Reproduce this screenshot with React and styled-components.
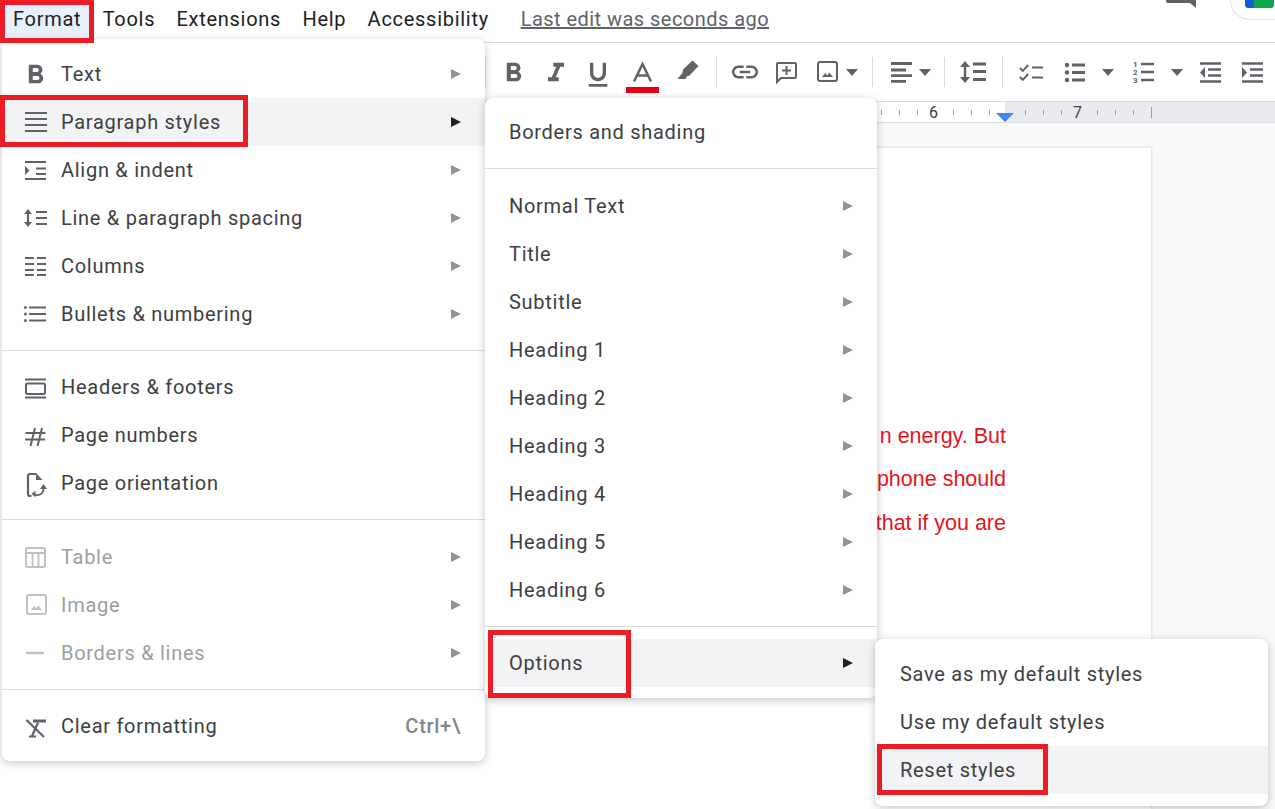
import React from "react";
import styled, { createGlobalStyle } from "styled-components";

const GRAY = "#5f6368";
const LIGHT = "#bdc1c6";

const GlobalStyle = createGlobalStyle`
	html, body {
		margin: 0;
		padding: 0;
		background: #fff;
		font-family: Roboto, "Liberation Sans", sans-serif;
	}
	* {
		box-sizing: border-box;
	}
`;

const Svg = ({ w = 24, h = 24, box, children, color = GRAY }) => (
	<IconSvg
		width={w}
		height={h}
		viewBox={box || `0 0 ${w} ${h}`}
		fill="none"
		stroke={color}
		strokeWidth="2.4"
		$color={color}
	>
		{children}
	</IconSvg>
);

const Bold = ({ color }) => (
	<Svg box="3.4 2 18 18" color={color}>
		<path
			stroke="none"
			fill={color || GRAY}
			d="M15.6 10.79c.97-.67 1.65-1.77 1.65-2.79 0-2.26-1.75-4-4-4H7v14h7.04c2.09 0 3.71-1.7 3.71-3.79 0-1.52-.86-2.82-2.15-3.42zM10 6.5h3c.83 0 1.5.67 1.5 1.5s-.67 1.5-1.5 1.5h-3v-3zm3.5 9H10v-3h3.5c.83 0 1.5.67 1.5 1.5s-.67 1.5-1.5 1.5z"
		/>
	</Svg>
);
const Italic = () => (
	<Svg box="3 2 18 18">
		<path stroke="none" fill={GRAY} d="M10 4v3h2.21l-3.42 8H6v3h8v-3h-2.21l3.42-8H18V4z" />
	</Svg>
);
const Underline = () => (
	<Svg box="3 1 18 18">
		<path
			stroke="none"
			fill={GRAY}
			d="M12 17c3.31 0 6-2.69 6-6V3h-2.5v8c0 1.93-1.57 3.5-3.5 3.5S8.5 12.93 8.5 11V3H6v8c0 3.31 2.69 6 6 6zm-7 2v2h14v-2H5z"
		/>
	</Svg>
);
const TextColor = () => (
	<Svg w={33} h={36}>
		<path d="M8 24.5 16.5 7 25 24.5M11 18.5h11" strokeWidth="2.5" />
		<rect x="0" y="30" width="33" height="6" fill="#e60012" stroke="none" />
	</Svg>
);
const Marker = () => (
	<Svg>
		<path
			stroke="none"
			fill={GRAY}
			d="M16.5.5l6 5.5-9.5 10h-2L9.5 19h-8L6 13.5 7 11V9.5z"
		/>
	</Svg>
);
const LinkIcon = () => (
	<Svg w={26} h={26} box="2 2 20 20">
		<path
			stroke="none"
			fill={GRAY}
			d="M3.9 12c0-1.71 1.39-3.1 3.1-3.1h4V7H7c-2.76 0-5 2.24-5 5s2.24 5 5 5h4v-1.9H7c-1.71 0-3.1-1.39-3.1-3.1zM8 13h8v-2H8v2zm9-6h-4v1.9h4c1.71 0 3.1 1.39 3.1 3.1s-1.39 3.1-3.1 3.1h-4V17h4c2.76 0 5-2.24 5-5s-2.24-5-5-5z"
		/>
	</Svg>
);
const CommentAdd = () => (
	<Svg>
		<path d="M4 3h17a1 1 0 0 1 1 1v13a1 1 0 0 1-1 1H7l-4 4V4a1 1 0 0 1 1-1z" strokeWidth="2" />
		<path d="M12.5 6v9M8 10.5h9" strokeWidth="2" />
	</Svg>
);
const ImageIcon = ({ color = GRAY }) => (
	<Svg color={color}>
		<rect x="3" y="2" width="19" height="19" rx="2" strokeWidth="2" />
		<path stroke="none" fill={color} d="M7 17l3.2-4 2 2.4 2-2.9L18 17z" />
	</Svg>
);
const Caret = () => (
	<Svg w={12} h={7}>
		<path stroke="none" fill={GRAY} d="M0 0h12L6 7z" />
	</Svg>
);
const AlignLeft = () => (
	<Svg>
		<path d="M2 3.5h21M2 10h15M2 15.7h21M2 21.4h15" strokeWidth="2.8" />
	</Svg>
);
const LineSpacing = () => (
	<Svg w={26} h={24}>
		<path d="M5 4v16" strokeWidth="2.4" />
		<path stroke="none" fill={GRAY} d="M5 1l5 6H0zM5 23l5-6H0z" />
		<path d="M13 4h13M13 11.5h13M13 19.5h13" strokeWidth="2.8" />
	</Svg>
);
const Checklist = () => (
	<Svg>
		<path d="M.8 8l3 2.8L9.2 5M.8 17l3 2.8 5.4-5.8" strokeWidth="1.9" />
		<path d="M13 7.5h11M13 17.5h11" strokeWidth="2" />
	</Svg>
);
const BulletList = () => (
	<Svg>
		<circle cx="4" cy="5" r="2.2" stroke="none" fill={GRAY} />
		<circle cx="4" cy="12.5" r="2.2" stroke="none" fill={GRAY} />
		<circle cx="4" cy="20" r="2.2" stroke="none" fill={GRAY} />
		<path d="M9 5h13M9 12.5h13M9 20h13" strokeWidth="2.8" />
	</Svg>
);
const NumberedList = () => (
	<Svg>
		<TinyNumber x="2" y="6.5">1</TinyNumber>
		<TinyNumber x="2" y="14.5">2</TinyNumber>
		<TinyNumber x="2" y="23">3</TinyNumber>
		<path d="M10 4h13M10 12h13M10 20h13" strokeWidth="2.6" />
	</Svg>
);
const Outdent = () => (
	<Svg>
		<path d="M1 3.5h21M9 9.5h13M9 15.5h13M1 21.5h21" strokeWidth="2.6" />
		<path stroke="none" fill={GRAY} d="M6 7v11l-5-5.5z" />
	</Svg>
);
const Indent = () => (
	<Svg>
		<path d="M1 3.5h21M9 9.5h13M9 15.5h13M1 21.5h21" strokeWidth="2.6" />
		<path stroke="none" fill={GRAY} d="M1 7v11l5-5.5z" />
	</Svg>
);

const ParagraphIcon = () => (
	<Svg>
		<path d="M1 3h22M1 9h22M1 15h22M1 21h22" strokeWidth="2.2" />
	</Svg>
);
const AlignIndent = () => (
	<Svg>
		<path d="M1 4h21M12 10.5h10M12 16h10M1 21h21" strokeWidth="2.2" />
		<path stroke="none" fill={GRAY} d="M1 8v9l4.5-4.5z" />
	</Svg>
);
const LineSpacingSmall = () => (
	<Svg>
		<path d="M4 6v12" strokeWidth="2.2" />
		<path stroke="none" fill={GRAY} d="M4 3l4 5H0zM4 21l4-5H0z" />
		<path d="M12 6h11M12 12h11M12 18h11" strokeWidth="2.2" />
	</Svg>
);
const ColumnsIcon = () => (
	<Svg>
		<path d="M1 4h9M1 10h9M1 16h9M1 21h9M13 4h9M13 10h9M13 16h9M13 21h9" strokeWidth="2.2" />
	</Svg>
);
const BulletsSmall = () => (
	<Svg>
		<circle cx="1.4" cy="5.5" r="1.5" stroke="none" fill={GRAY} />
		<circle cx="1.4" cy="12" r="1.5" stroke="none" fill={GRAY} />
		<circle cx="1.4" cy="18.5" r="1.5" stroke="none" fill={GRAY} />
		<path d="M5 5.5h17M5 12h17M5 18.5h17" strokeWidth="2" />
	</Svg>
);
const HeadersIcon = () => (
	<Svg>
		<path d="M1 4.5h21M1 22.5h21" strokeWidth="2.2" />
		<rect x="2" y="8.5" width="19" height="10.5" rx="1.5" strokeWidth="2" />
	</Svg>
);
const HashIcon = () => (
	<Svg>
		<path d="M1.5 10h20M1 16.5h20M11 5l-4.5 18M18 5l-4.5 18" strokeWidth="2" />
	</Svg>
);
const PageOrient = () => (
	<Svg>
		<path d="M12 3H6a2 2 0 0 0-2 2v18a2 2 0 0 0 2 2h1.5" strokeWidth="2.2" />
		<path stroke="none" fill={GRAY} d="M12 2l6.5 7H12z" />
		<path d="M10 23c3 2 7 1 8.5-1.5 1-1.5 1-2.5 1-4.5" strokeWidth="1.8" />
		<path stroke="none" fill={GRAY} d="M19.5 13l3.5 5h-7zM7.5 23l4-3.2v6.4z" />
	</Svg>
);
const TableIcon = () => (
	<Svg color={LIGHT}>
		<rect x="2" y="3" width="19" height="19" rx="2" strokeWidth="2" />
		<path d="M2 8h19M8.5 8v14M14.5 8v14" strokeWidth="1.8" />
	</Svg>
);
const DashIcon = () => (
	<Svg color={LIGHT}>
		<path d="M2 12h18" strokeWidth="2.4" />
	</Svg>
);
const ClearIcon = () => (
	<Svg>
		<path d="M2.5 6 20 23M14 8.5 8 22M5 22.5h7" strokeWidth="2.2" />
		<path d="M9 7h13" strokeWidth="3" />
	</Svg>
);

const Item = ({ icon, label, arrow = true, active, disabled, shortcut, inset = 22 }) => (
	<Row $active={active} $disabled={disabled} $inset={inset}>
		{icon && <IconSlot>{icon}</IconSlot>}
		<Label>{label}</Label>
		{shortcut && <Shortcut>{shortcut}</Shortcut>}
		{arrow && <Arrow $active={active} />}
	</Row>
);

const tickSlots = [0, 1, 2, "6", 4, 5, 6, "m", 8, 9, 10, "7", 12, 13, 14, "e"];

export default function App() {
	return (
		<Screen>
			<GlobalStyle />
			<MenuBar>
				<MenuButton $open>Format</MenuButton>
				<MenuButton>Tools</MenuButton>
				<MenuButton>Extensions</MenuButton>
				<MenuButton>Help</MenuButton>
				<MenuButton>Accessibility</MenuButton>
				<LastEdit>Last edit was seconds ago</LastEdit>
				<Corner>
					<svg width="30" height="8" viewBox="0 0 30 8">
						<path d="M0 0h30v8l-6-5H2a2 2 0 0 1-2-2z" fill={GRAY} />
					</svg>
					<MeetPill>
						<MeetBlue />
						<MeetGreen />
					</MeetPill>
				</Corner>
			</MenuBar>

			<Toolbar>
				<ToolDivider $gap={0} />
				<Tool $gap={16}><Bold /></Tool>
				<Tool $gap={18}><Italic /></Tool>
				<Tool $gap={18}><Underline /></Tool>
				<Tool $gap={16} $raise={6}><TextColor /></Tool>
				<Tool $gap={17}><Marker /></Tool>
				<ToolDivider $gap={16} />
				<Tool $gap={15}><LinkIcon /></Tool>
				<Tool $gap={16}><CommentAdd /></Tool>
				<Tool $gap={17}><ImageIcon /></Tool>
				<Tool $gap={7}><Caret /></Tool>
				<ToolDivider $gap={14} />
				<Tool $gap={16}><AlignLeft /></Tool>
				<Tool $gap={6}><Caret /></Tool>
				<ToolDivider $gap={13} />
				<Tool $gap={15}><LineSpacing /></Tool>
				<ToolDivider $gap={16} />
				<Tool $gap={16}><Checklist /></Tool>
				<Tool $gap={20}><BulletList /></Tool>
				<Tool $gap={15}><Caret /></Tool>
				<Tool $gap={17}><NumberedList /></Tool>
				<Tool $gap={16}><Caret /></Tool>
				<Tool $gap={16}><Outdent /></Tool>
				<Tool $gap={18}><Indent /></Tool>
			</Toolbar>

			<Ruler>
				{tickSlots.map((t) => (
					<TickSlot key={t}>
						{t === "6" || t === "7" ? (
							<RulerNumber>{t}</RulerNumber>
						) : t === "m" ? (
							<IndentMarker />
						) : (
							<Tick $tall={t === "e"} />
						)}
					</TickSlot>
				))}
			</Ruler>

			<Canvas>
				<Page>
					<RedLine>n energy. But</RedLine>
					<RedLine>phone should</RedLine>
					<RedLine>that if you are</RedLine>
				</Page>
			</Canvas>

			<FormatMenu>
				<Item icon={<Bold />} label="Text" />
				<Item icon={<ParagraphIcon />} label="Paragraph styles" active />
				<Item icon={<AlignIndent />} label="Align & indent" />
				<Item icon={<LineSpacingSmall />} label="Line & paragraph spacing" />
				<Item icon={<ColumnsIcon />} label="Columns" />
				<Item icon={<BulletsSmall />} label="Bullets & numbering" />
				<Divider />
				<Item icon={<HeadersIcon />} label="Headers & footers" arrow={false} />
				<Item icon={<HashIcon />} label="Page numbers" arrow={false} />
				<Item icon={<PageOrient />} label="Page orientation" arrow={false} />
				<Divider $wide />
				<Item icon={<TableIcon />} label="Table" disabled />
				<Item icon={<ImageIcon color={LIGHT} />} label="Image" disabled />
				<Item icon={<DashIcon />} label="Borders & lines" disabled />
				<Divider />
				<Item icon={<ClearIcon />} label="Clear formatting" arrow={false} shortcut="Ctrl+\" />
			</FormatMenu>

			<StylesMenu>
				<Item inset={24} label="Borders and shading" arrow={false} />
				<Divider $wide />
				<Item inset={24} label="Normal Text" />
				<Item inset={24} label="Title" />
				<Item inset={24} label="Subtitle" />
				<Item inset={24} label="Heading 1" />
				<Item inset={24} label="Heading 2" />
				<Item inset={24} label="Heading 3" />
				<Item inset={24} label="Heading 4" />
				<Item inset={24} label="Heading 5" />
				<Item inset={24} label="Heading 6" />
				<Divider />
				<Item inset={24} label="Options" active />
			</StylesMenu>

			<OptionsMenu>
				<Item inset={25} label="Save as my default styles" arrow={false} />
				<Item inset={25} label="Use my default styles" arrow={false} />
				<Item inset={25} label="Reset styles" arrow={false} active />
			</OptionsMenu>

			<Callout $x={0} $y={0} $w={94} $h={43} />
			<Callout $x={0} $y={95} $w={248} $h={52} />
			<Callout $x={488} $y={630} $w={143} $h={68} />
			<Callout $x={877} $y={744} $w={171} $h={51} />
		</Screen>
	);
}

const Screen = styled.div`
	position: relative;
	width: 1275px;
	height: 809px;
	overflow: hidden;
	display: flex;
	flex-direction: column;
	background: #fff;
`;

const IconSvg = styled.svg`
	display: block;
	flex-shrink: 0;
	overflow: visible;
	color: ${(p) => p.$color};
`;

const TinyNumber = styled.text`
	font-family: Roboto, sans-serif;
	font-size: 8px;
	font-weight: 700;
	fill: ${GRAY};
	stroke: none;
`;

// * top menu bar

const MenuBar = styled.div`
	height: 43px;
	flex-shrink: 0;
	display: flex;
	align-items: center;
	padding-left: 4px;
	border-bottom: 1px solid #dadce0;
`;

const MenuButton = styled.div`
	height: 36px;
	display: flex;
	align-items: center;
	padding: 0 9px 5px;
	margin-right: 3.3px;
	font-size: 20px;
	letter-spacing: 0.72px;
	color: #202124;
	background: ${(p) => (p.$open ? "#e8f0fe" : "transparent")};
`;

const LastEdit = styled.div`
	margin: 0 0 5px 19.5px;
	font-size: 20px;
	letter-spacing: 0.46px;
	color: ${GRAY};
	text-decoration: underline;
`;

const Corner = styled.div`
	margin-left: auto;
	align-self: flex-start;
	display: flex;
	align-items: flex-start;
	gap: 34px;
`;

const MeetPill = styled.div`
	width: 45px;
	height: 20px;
	border: 1px solid #e3e3e3;
	border-top: 0;
	border-right: 0;
	border-bottom-left-radius: 20px;
	display: flex;
	padding-left: 14px;
`;

const MeetBlue = styled.div`
	width: 9px;
	height: 8px;
	background: #0f62d6;
	border-bottom-left-radius: 3px;
`;

const MeetGreen = styled.div`
	width: 20px;
	height: 8px;
	background: #0fa84f;
	border-bottom-right-radius: 3px;
`;

// * toolbar

const Toolbar = styled.div`
	height: 58px;
	flex-shrink: 0;
	display: flex;
	align-items: center;
	padding-left: 485px;
`;

const Tool = styled.div`
	margin-left: ${(p) => p.$gap}px;
	margin-top: ${(p) => p.$raise || 0}px;
`;

const ToolDivider = styled.div`
	width: 1px;
	height: 30px;
	margin-left: ${(p) => p.$gap}px;
	background: #dadce0;
`;

// * ruler

const Ruler = styled.div`
	height: 22px;
	flex-shrink: 0;
	display: flex;
	align-items: center;
	padding-left: 872px;
	border-top: 1px solid #dadce0;
	border-bottom: 1px solid #dadce0;
	background: linear-gradient(to right, #fff 1005px, #e8eaed 1005px);
`;

const TickSlot = styled.div`
	width: 18px;
	height: 100%;
	display: flex;
	align-items: center;
	justify-content: center;
	position: relative;
`;

const Tick = styled.div`
	width: 1px;
	height: ${(p) => (p.$tall ? 11 : 5)}px;
	background: #9aa0a6;
`;

const RulerNumber = styled.div`
	margin-left: -3px;
	font-size: 16px;
	color: #3c4043;
`;

const IndentMarker = styled.div`
	position: absolute;
	left: -2px;
	bottom: 0;
	width: 0;
	height: 0;
	border-left: 9px solid transparent;
	border-right: 9px solid transparent;
	border-top: 9px solid #4285f4;
`;

// * document

const Canvas = styled.div`
	flex: 1;
	display: flex;
	padding: 25px 124px 0 0;
	background: #f8f9fa;
`;

const Page = styled.div`
	flex: 1;
	padding: 266.8px 145px 0 0;
	background: #fff;
	box-shadow: 0 0 3px rgba(60, 64, 67, 0.25);
`;

const RedLine = styled.div`
	height: 43.4px;
	line-height: 43.4px;
	text-align: right;
	font-family: "Liberation Sans", Arial, sans-serif;
	font-size: 21.5px;
	color: #e6141c;
`;

// * menus

const Menu = styled.div`
	position: absolute;
	background: #fff;
	border-radius: 8px;
	box-shadow: 0 2px 8px rgba(60, 64, 67, 0.3);
`;

const FormatMenu = styled(Menu)`
	left: 2px;
	top: 39px;
	width: 483px;
	height: 722px;
	padding-top: 11px;
`;

const StylesMenu = styled(Menu)`
	left: 485px;
	top: 98px;
	width: 392px;
	height: 600px;
	padding-top: 10px;
`;

const OptionsMenu = styled(Menu)`
	left: 875px;
	top: 639px;
	width: 393px;
	height: 167px;
	padding-top: 11px;
`;

const Row = styled.div`
	height: 48px;
	display: flex;
	align-items: center;
	padding: 0 24px 0 ${(p) => p.$inset}px;
	font-size: 20px;
	letter-spacing: 0.72px;
	color: ${(p) => (p.$disabled ? "#9aa0a6" : "#3c4043")};
	background: ${(p) => (p.$active ? "#f1f3f4" : "transparent")};
`;

const IconSlot = styled.div`
	width: 24px;
	height: 24px;
	margin-right: 13px;
`;

const Label = styled.div`
	flex: 1;
	white-space: nowrap;
`;

const Shortcut = styled.div`
	font-weight: 500;
	color: #80868b;
`;

const Arrow = styled.div`
	width: 0;
	height: 0;
	border-top: 5.5px solid transparent;
	border-bottom: 5.5px solid transparent;
	border-left: 10px solid ${(p) => (p.$active ? "#202124" : "#919496")};
`;

const Divider = styled.div`
	height: 1px;
	margin: 12px 0 ${(p) => (p.$wide ? 13 : 12)}px;
	background: #dadce0;
`;

// * red annotation boxes

const Callout = styled.div`
	position: absolute;
	left: ${(p) => p.$x}px;
	top: ${(p) => p.$y}px;
	width: ${(p) => p.$w}px;
	height: ${(p) => p.$h}px;
	border: 5px solid #ed1c24;
`;
